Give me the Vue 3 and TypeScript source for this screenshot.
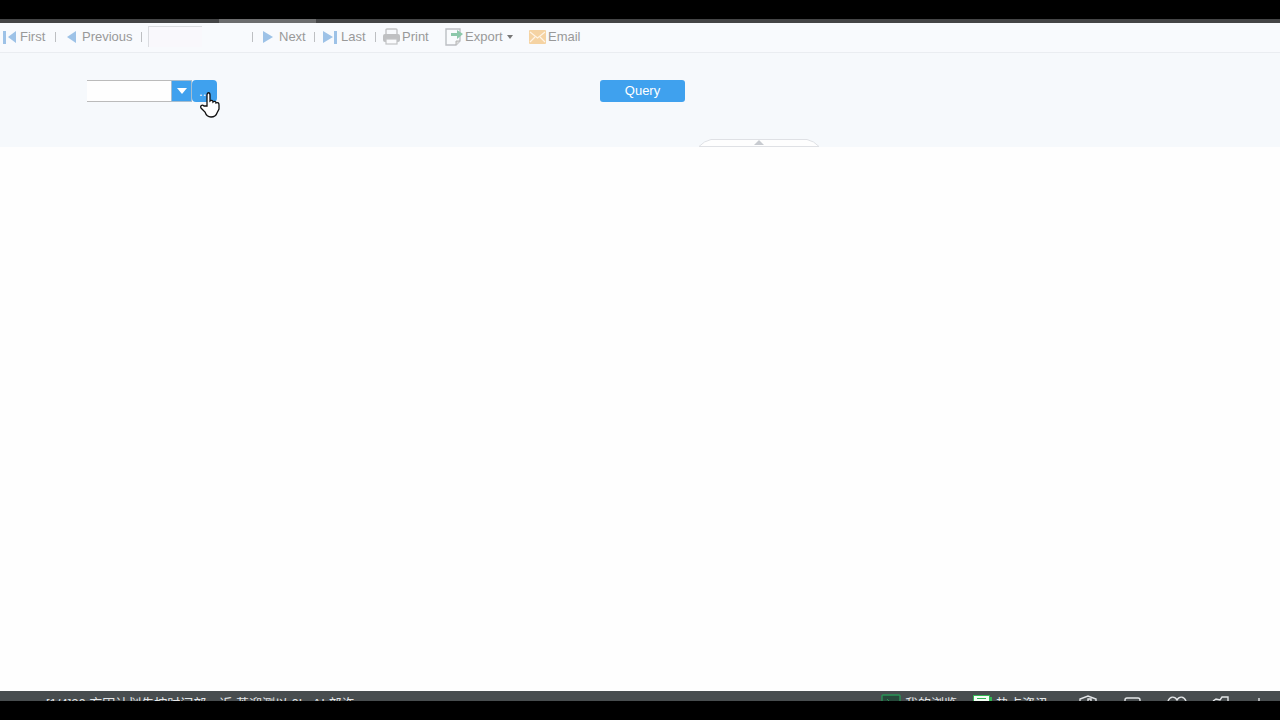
<script setup lang="ts">
import { ref } from 'vue'

const page = ref('')
const parameter = ref('')
</script>

<template>
  <div class="screen">
    <div class="top-band"></div>
    <div class="tab-strip"><i></i></div>
    <nav class="toolbar" aria-label="Report toolbar">
      <button class="first"><svg width="14" height="14" viewBox="0 0 14 14"><path d="M0 1h3v13H0zM13 1v12L5 7z" /></svg>First</button>
      <i class="sep"></i>
      <button class="previous"><svg width="10" height="14" viewBox="0 0 10 14"><path d="M9 1v12L0 7z" /></svg>Previous</button>
      <i class="sep"></i>
      <input v-model="page" class="page" type="text" aria-label="Page number" />
      <i class="sep"></i>
      <button class="next"><svg width="10" height="14" viewBox="0 0 10 14"><path d="M0 1v12l10-6z" /></svg>Next</button>
      <i class="sep"></i>
      <button class="last"><svg width="14" height="14" viewBox="0 0 14 14"><path d="M0 1v12l10-6zM11 1h3v13h-3z" /></svg>Last</button>
      <i class="sep"></i>
      <button class="print">
        <svg width="17" height="17" viewBox="0 0 17 17">
          <path d="M3 6V2q0-1 1-1h9q1 0 1 1v4" fill="#f7f9fc" stroke="#c2c3c5" stroke-width="1.4" />
          <rect y="6" width="17" height="8" rx="2" fill="#bfc0c2" />
          <rect x="3" y="11" width="11" height="5" fill="#f9fafc" stroke="#c2c3c5" stroke-width="1.2" />
        </svg>Print
      </button>
      <button class="export">
        <svg width="18" height="18" viewBox="0 0 18 18">
          <path d="M1 1h14v12l-4 4H1z" fill="#f9fbfd" stroke="#bcbfc3" stroke-width="1.4" />
          <path d="M11 17v-4h4" fill="#ddd" stroke="#b4b4b4" />
          <path d="M6 5h6V2l6 4-6 5V8H6z" fill="#8cc8aa" />
        </svg>Export<svg class="caret" width="6" height="4" viewBox="0 0 6 4"><path d="M0 0h6L3 4z" fill="#777" /></svg>
      </button>
      <button class="email">
        <svg width="17" height="14" viewBox="0 0 17 14">
          <rect width="17" height="14" rx="1" fill="#f5d3a3" />
          <path d="M1 2l7.5 6L16 2M1 12l5-5M16 12l-5-5" fill="none" stroke="#fff4e5" stroke-width="1.2" />
        </svg>Email
      </button>
    </nav>
    <form class="parameters" @submit.prevent>
      <div class="combo">
        <input v-model="parameter" type="text" aria-label="Parameter value" />
        <button class="drop" type="button" aria-label="Open list"><svg width="10" height="6" viewBox="0 0 10 6"><path d="M0 0h10L5 6z" fill="#fff" /></svg></button>
        <button class="more" type="button" aria-label="More choices">...
          <svg class="pointer" width="21" height="26" viewBox="0 0 21 26"><path d="M7 14V3c0-3 3-3 3 0v6c1-1 3-1 3 1 1-1 3-1 3 1 2-1 3 0 3 2v4l-2 4c-1 3-3 4-6 4-4 0-5-2-6-5l-4-4c-1-2 1-4 3-2z" fill="#fff" stroke="#111" stroke-width="1.3" /></svg>
        </button>
      </div>
      <button class="query" type="submit">Query</button>
      <button class="collapse" type="button" aria-label="Collapse parameters">
        <svg width="120" height="8" viewBox="0 0 120 8"><path d="M0 7.5Q5 2 12 .5h96Q115 2 120 7.5z" fill="#fefefe" stroke="#dfe1e5" /><path d="M55 6l5-5 5 5z" fill="#c8cbd0" /></svg>
      </button>
    </form>
    <main></main>
    <footer class="status">
      <span class="headline">[1/4]20 方因计划先按时间部，近 英迎测以 0L, AI 部许</span>
      <div class="tray">
        <svg class="monitor" width="20" height="10" viewBox="0 0 20 10"><path d="M1 10V5q0-1 1-1h16q1 0 1 1v5" fill="#26483a" stroke="#299355" stroke-width="1.4" /><path d="m6 8 2 2" stroke="#299355" /></svg>
        <span class="mine">我的浏览</span>
        <svg class="news" width="20" height="10" viewBox="0 0 20 10"><path d="M0 10V4h17v2h2v4" fill="#32b653" /><path d="M1 10V5h15v5" fill="#f5fff7" /><path d="M4 7.5h9" stroke="#32b653" /></svg>
        <span class="hot">热点资讯</span>
        <svg class="tools" width="190" height="10" viewBox="0 0 190 10"><g fill="none" stroke="#e4e6e8" stroke-width="1.4"><path d="M1 10V8l8-3 8 3v2M9 10V8h3v2M46 10V9q0-2 2-2h11q2 0 2 2v1M89 10c2-5 7-5 9-1 2-4 7-4 9 1M134 10l3-2 4 1 2-3h6v4M180 7v3" /></g></svg>
      </div>
    </footer>
    <div class="bottom-band"></div>
  </div>
</template>

<style scoped>
.screen { min-height: 100vh; display: flex; flex-direction: column; background: #fefefe; font: 13px "Liberation Sans", Arial, "Noto Sans CJK SC", sans-serif; color: #999; }
.top-band { height: 19px; background: #000; }
.tab-strip { height: 4px; background: #444546; }
.tab-strip i { display: block; width: 97px; height: 4px; margin-left: 219px; background: #6c6d6e; }
button { display: flex; align-items: center; border: 0; padding: 0; background: transparent; color: inherit; font: inherit; flex-shrink: 0; }
input { box-sizing: border-box; min-width: 0; border: 0; padding: 0; font: inherit; }
svg { display: block; flex-shrink: 0; fill: #9dc2e7; }
.toolbar { box-sizing: border-box; height: 30px; display: flex; align-items: center; padding: 0 0 2px 3px; background: #f8fafd; border-bottom: 1px solid #eaedf1; }
.toolbar button { height: 26px; gap: 4px; }
.toolbar .first { gap: 3px; }
.sep { width: 1px; height: 10px; flex-shrink: 0; background: #bdbfc2; }
.first { width: 52px; }
.toolbar .previous { width: 74px; margin-left: 11px; gap: 5px; }
.page { width: 54px; height: 21px; margin: 0 50px 0 6px; border: 1px solid #dadce0; border-width: 1px 0 0 1px; background: #f9f8fc; }
.toolbar .next { width: 51px; margin-left: 10px; gap: 6px; }
.last { width: 52px; margin-left: 8px; }
.toolbar .print { width: 62px; margin-left: 7px; gap: 2px; }
.toolbar .export { width: 84px; gap: 2px; }
.caret { margin-left: 2px; }
.toolbar .email { gap: 2px; }
.parameters { position: relative; box-sizing: border-box; height: 94px; display: flex; align-items: flex-start; padding: 27px 0 0 87px; background: #f6f9fc; }
.combo { display: flex; width: 130px; margin-right: 383px; }
.combo input { width: 84px; height: 22px; border: 1px solid #bbb; border-width: 1px 0; background: #fefefe; }
.drop, .more { height: 22px; justify-content: center; background: #3fa1ee; color: #fff; }
.drop { width: 21px; border: 1px solid #a5bdd0; }
.more { position: relative; width: 25px; border-radius: 4px; }
.pointer { position: absolute; left: 8px; top: 12px; z-index: 1; }
.query { width: 85px; height: 22px; justify-content: center; padding-bottom: 1px; border-radius: 3px; background: #3fa1ee; color: #fff; }
.collapse { position: absolute; left: 699px; bottom: 0; }
main { flex: 1; }
.status { height: 10px; display: flex; justify-content: space-between; overflow: hidden; background: #484d4f; color: #e4e6e8; font-size: 13px; line-height: 18px; white-space: nowrap; }
.headline { margin: 4px 0 0 46px; }
.tray { display: flex; align-items: flex-start; }
.mine { width: 68px; margin: 4px 0 0 4px; }
.hot { width: 83px; margin: 4px 0 0 3px; }
.tools { margin-right: 11px; }
.bottom-band { height: 19px; background: #000; }
</style>
